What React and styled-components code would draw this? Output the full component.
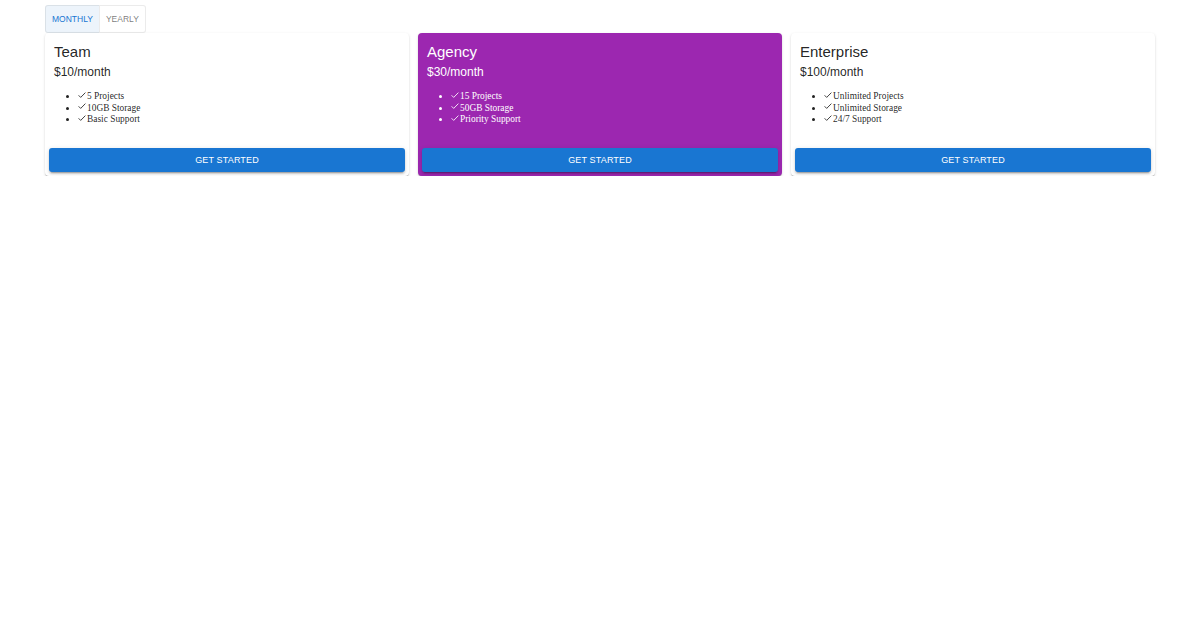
import React, { useState } from "react";
import styled, { createGlobalStyle } from "styled-components";

const Global = createGlobalStyle`
  html, body { margin: 0; padding: 0; background: #fff; }
  body { font-family: "Liberation Sans", Arial, Helvetica, sans-serif; }
`;

const Page = styled.div`
  padding: 5px 45px 0 45px;
  width: 1110px;
`;

const ToggleGroup = styled.div`
  display: inline-flex;
  border-radius: 3px;
`;

const Toggle = styled.button`
  height: 28px;
  padding: 0 6px;
  border: 1px solid rgba(0, 0, 0, 0.08);
  margin-left: ${(p) => (p.$first ? "0" : "-1px")};
  border-radius: ${(p) => (p.$first ? "3px 0 0 3px" : "0 3px 3px 0")};
  background: ${(p) => (p.$active ? "rgba(25, 118, 210, 0.08)" : "#fff")};
  color: ${(p) => (p.$active ? "#1976d2" : "rgba(0, 0, 0, 0.54)")};
  font-family: "Liberation Sans", Arial, Helvetica, sans-serif;
  font-size: 8.5px;
  font-weight: 400;
  letter-spacing: 0;
  text-transform: uppercase;
  cursor: pointer;
`;

const Grid = styled.div`
  display: grid;
  grid-template-columns: repeat(3, 1fr);
  gap: 9px;
`;

const Card = styled.div`
  background: ${(p) => (p.$featured ? "#9c27b0" : "#fff")};
  color: ${(p) => (p.$featured ? "#fff" : "rgba(0, 0, 0, 0.87)")};
  border-radius: 4px;
  box-shadow: 0px 2px 1px -1px rgba(0, 0, 0, 0.2), 0px 1px 1px 0px rgba(0, 0, 0, 0.14),
    0px 1px 3px 0px rgba(0, 0, 0, 0.12);
  display: flex;
  flex-direction: column;
`;

const Content = styled.div`
  padding: 10px 9px 9px 9px;
`;

const Title = styled.div`
  font-size: 15px;
  line-height: 18px;
  margin-bottom: 2px;
`;

const Price = styled.div`
  font-size: 12px;
  line-height: 18px;
`;

const List = styled.ul`
  margin: 10px 0 9px 0;
  padding-left: 24px;
  font-family: "Liberation Serif", "Times New Roman", serif;
  font-size: 9.4px;
  line-height: 11.5px;
`;

const Item = styled.li`
  height: 11.5px;
`;

const CheckIcon = styled.svg`
  display: inline-block;
  width: 8px;
  height: 6px;
  margin-right: 1px;
  vertical-align: 1.5px;
  overflow: visible;
`;

const Check = () => (
  <CheckIcon viewBox="0 0 8 6">
    <polyline points="0.6,3.3 2.7,5.4 7.4,0.6" fill="none" stroke="currentColor" strokeWidth="0.85" />
  </CheckIcon>
);

const Actions = styled.div`
  padding: 4px;
`;

const Button = styled.button`
  width: 100%;
  height: 24px;
  border: none;
  border-radius: 3px;
  background: #1976d2;
  color: #fff;
  font-family: "Liberation Sans", Arial, Helvetica, sans-serif;
  font-size: 9px;
  font-weight: 400;
  letter-spacing: 0.15px;
  text-transform: uppercase;
  box-shadow: 0px 3px 1px -2px rgba(0, 0, 0, 0.2), 0px 2px 2px 0px rgba(0, 0, 0, 0.14),
    0px 1px 5px 0px rgba(0, 0, 0, 0.12);
  cursor: pointer;
`;

const plans = [
  { name: "Team", price: "$10/month", features: ["5 Projects", "10GB Storage", "Basic Support"] },
  { name: "Agency", price: "$30/month", features: ["15 Projects", "50GB Storage", "Priority Support"], featured: true },
  { name: "Enterprise", price: "$100/month", features: ["Unlimited Projects", "Unlimited Storage", "24/7 Support"] },
];

export default function App() {
  const [period, setPeriod] = useState("monthly");
  return (
    <Page>
      <Global />
      <ToggleGroup>
        <Toggle $first $active={period === "monthly"} onClick={() => setPeriod("monthly")}>
          Monthly
        </Toggle>
        <Toggle $active={period === "yearly"} onClick={() => setPeriod("yearly")}>
          Yearly
        </Toggle>
      </ToggleGroup>
      <Grid>
        {plans.map((p) => (
          <Card key={p.name} $featured={p.featured}>
            <Content>
              <Title>{p.name}</Title>
              <Price>{p.price}</Price>
              <List>
                {p.features.map((f) => (
                  <Item key={f}>
                    <Check />
                    {f}
                  </Item>
                ))}
              </List>
            </Content>
            <Actions>
              <Button>Get Started</Button>
            </Actions>
          </Card>
        ))}
      </Grid>
    </Page>
  );
}
